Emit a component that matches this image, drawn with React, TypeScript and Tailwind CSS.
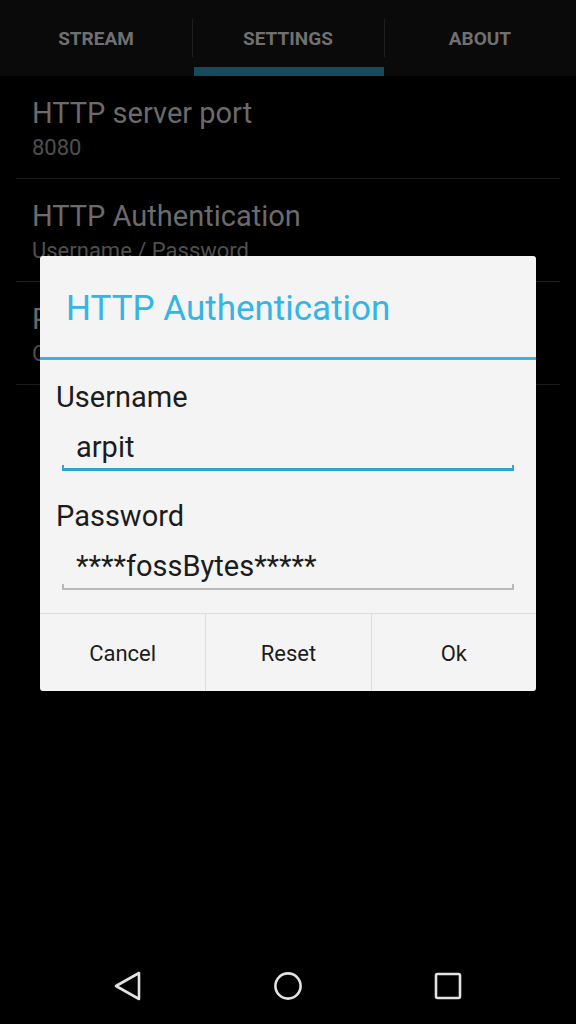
const tabs = ["STREAM", "SETTINGS", "ABOUT"]

const settings = [
  { title: "HTTP server port", summary: "8080" },
  { title: "HTTP Authentication", summary: "Username / Password" },
  { title: "Pin request", summary: "Change pin" },
]

function TabBar() {
  return (
    <div className="h-[76px] bg-[#0a0a0a] grid grid-cols-3">
      {tabs.map((tab, i) => (
        <div key={tab} className="relative flex flex-col">
          {i > 0 && <div className="absolute left-0 top-[19px] h-[38px] w-px bg-[#1f1f1f]" />}
          <div className="h-[67px] pt-[29px] text-center text-[19px] leading-[19px] font-bold text-[#707070]">
            {tab}
          </div>
          {i === 1 && <div className="h-[9px] ml-[2px] bg-[#174a5c]" />}
        </div>
      ))}
    </div>
  )
}

function SettingsList() {
  return (
    <div className="mx-4">
      {settings.map((item) => (
        <div key={item.title} className="pl-4 pt-[23px] pb-[19px] border-b border-[#1c1c1c]">
          <div className="text-[29px] leading-[29px] text-[#6b6b6b] whitespace-nowrap">{item.title}</div>
          <div className="mt-[9px] text-[22px] leading-[22px] text-[#4f4f4f] whitespace-nowrap">{item.summary}</div>
        </div>
      ))}
    </div>
  )
}

function Field({ label, value, focused }: { label: string; value: string; focused?: boolean }) {
  return (
    <div>
      <div className="pl-4 text-[29px] leading-[29px] text-[#1c1c1c]">{label}</div>
      <div className="mx-[22px] mt-[21px]">
        <div className="pl-[14px] text-[29px] leading-[29px] text-[#1c1c1c]">{value}</div>
        <div
          className={
            focused
              ? "mt-[3px] h-[6px] border-x-2 border-b-[3px] border-[#2ba4d9]"
              : "mt-[3px] h-[6px] border-x-2 border-b-2 border-[#b9b9b9]"
          }
        />
      </div>
    </div>
  )
}

function AuthDialog() {
  return (
    <div className="absolute top-[256px] left-[40px] w-[496px] rounded-[3px] bg-[#f4f4f4] shadow-lg">
      <div className="h-[101px] pl-[26px] pt-[35px] text-[35px] leading-[35px] text-[#33b5e5]">
        HTTP Authentication
      </div>
      <div className="h-[3px] bg-[#33b5e5]" />
      <div className="pt-[23px] flex flex-col gap-[31px]">
        <Field label="Username" value="arpit" focused />
        <Field label="Password" value="****fossBytes*****" />
      </div>
      <div className="mt-[23px] border-t border-[#dcdcdc] grid grid-cols-3 h-[78px]">
        {["Cancel", "Reset", "Ok"].map((b, i) => (
          <div
            key={b}
            className={
              i > 0
                ? "flex items-center justify-center pt-[2px] border-l border-[#dcdcdc] text-[22px] text-[#1c1c1c]"
                : "flex items-center justify-center pt-[2px] text-[22px] text-[#1c1c1c]"
            }
          >
            {b}
          </div>
        ))}
      </div>
    </div>
  )
}

function NavBar() {
  return (
    <div className="h-[76px] px-12 grid grid-cols-3 items-center">
      <div className="flex justify-center">
        <svg width="30" height="32" viewBox="0 0 30 32" fill="none" stroke="#e2e2e2" strokeWidth="2.6" strokeLinejoin="round">
          <path d="M26 3 L26 29 L3 16 Z" />
        </svg>
      </div>
      <div className="flex justify-center">
        <svg width="30" height="30" viewBox="0 0 30 30" fill="none" stroke="#e2e2e2" strokeWidth="2.6">
          <circle cx="15" cy="15" r="12.6" />
        </svg>
      </div>
      <div className="flex justify-center">
        <svg width="28" height="28" viewBox="0 0 28 28" fill="none" stroke="#e2e2e2" strokeWidth="2.6">
          <rect x="2" y="2" width="24" height="24" rx="1.5" />
        </svg>
      </div>
    </div>
  )
}

export default function App() {
  return (
    <div className="relative w-[576px] h-[1024px] bg-black flex flex-col font-['Roboto',sans-serif]">
      <TabBar />
      <SettingsList />
      <div className="flex-1" />
      <NavBar />
      <AuthDialog />
    </div>
  )
}
